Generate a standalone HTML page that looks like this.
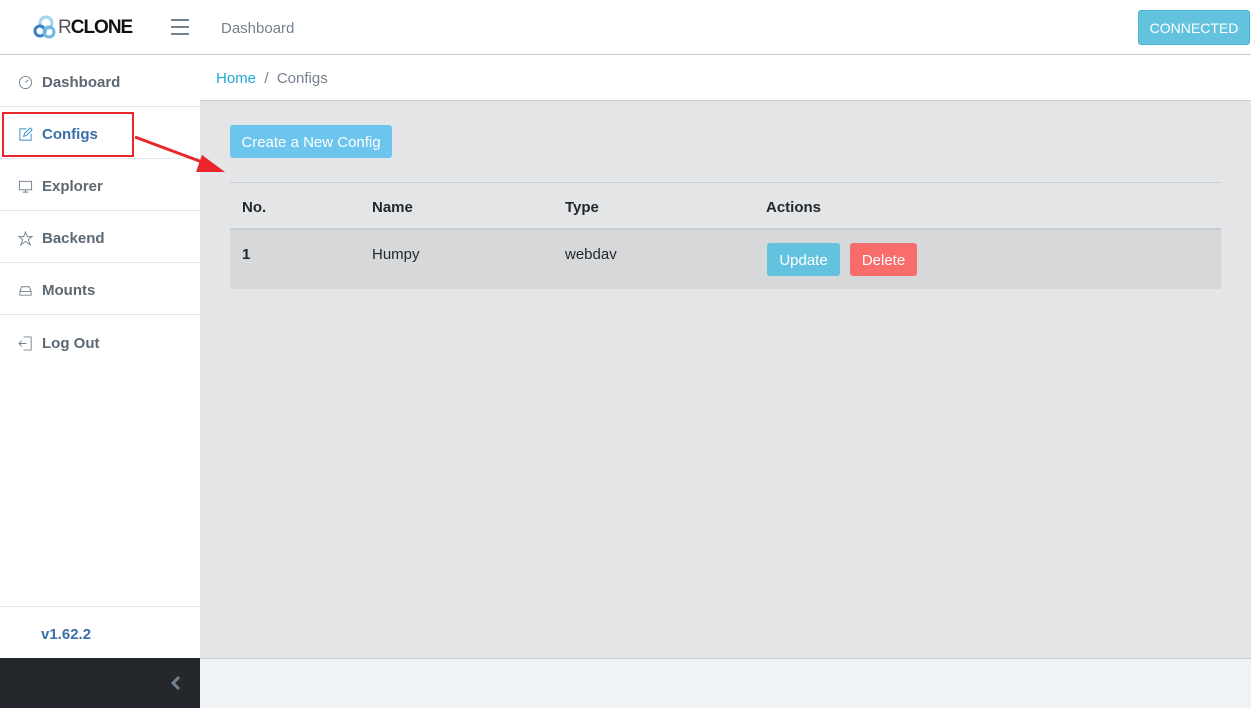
<!DOCTYPE html><html><head><style>
*{box-sizing:border-box;margin:0;padding:0}
body{width:1251px;height:708px;overflow:hidden;font-family:"Liberation Sans",sans-serif;background:#e4e5e6;position:relative;font-size:15px}
.hdr{position:absolute;left:0;top:0;width:1251px;height:55px;background:#fff;border-bottom:1px solid #c8ced3}
.side{position:absolute;left:0;top:55px;width:200px;height:603px;background:#fff}
.item{height:52px;border-bottom:1px solid #e4e7ea;display:flex;align-items:center;padding-left:18px;padding-top:4px;font-weight:bold;color:#5c6873;font-size:15px}
.item svg{width:15px;height:15px;margin-right:9px}
.bc{position:absolute;left:200px;top:55px;width:1051px;height:46px;background:#fff;border-bottom:1px solid #c8ced3;padding:15px 16px;color:#73818f}
.foot{position:absolute;left:200px;top:658px;width:1051px;height:50px;background:#f0f3f5;border-top:1px solid #c8ced3}
.btn{position:absolute;color:#fff;border-radius:3px;font-size:15px;text-align:center}
</style></head><body>
<div class="hdr">
<svg style="position:absolute;left:33px;top:15px" width="24" height="24" viewBox="0 0 24 24"><circle cx="13" cy="8" r="6" fill="none" stroke="#9fd3ee" stroke-width="3"/><circle cx="7" cy="16" r="5" fill="none" stroke="#3d7fc1" stroke-width="3"/><circle cx="16" cy="17" r="5" fill="none" stroke="#6fb8e2" stroke-width="3"/></svg>
<div style="position:absolute;left:58px;top:17px;font-size:19px;color:#111;letter-spacing:-1px"><span style="font-weight:normal;color:#555">R</span><b>CLONE</b></div>
<div style="position:absolute;left:171px;top:19px;width:18px"><div style="height:2px;background:#73818f;margin-bottom:5px"></div><div style="height:2px;background:#73818f;margin-bottom:5px"></div><div style="height:2px;background:#73818f"></div></div>
<div style="position:absolute;left:221px;top:20px;color:#73818f">Dashboard</div>
<div class="btn" style="left:1138px;top:10px;width:112px;height:35px;background:#63c2de;line-height:35px;border:1px solid #4fb5d4;font-size:14px">CONNECTED</div>
</div>
<div class="side">
<div class="item"><svg viewBox="0 0 16 16" fill="none" stroke="#73818f"><circle cx="8" cy="8" r="6.5"/><path d="M8 8l3-3"/></svg>Dashboard</div>
<div class="item" style="color:#3a6fa8"><svg viewBox="0 0 16 16" fill="none" stroke="#3a8fc8"><path d="M9 2H2v12h12V7M6 10l1-3 6-6 2 2-6 6z"/></svg>Configs</div>
<div class="item"><svg viewBox="0 0 16 16" fill="none" stroke="#73818f"><rect x="1.5" y="2.5" width="13" height="9"/><path d="M5 14h6M8 12v2"/></svg>Explorer</div>
<div class="item"><svg viewBox="0 0 16 16" fill="none" stroke="#73818f"><path d="M8 1l2 5h5l-4 3 2 6-5-4-5 4 2-6-4-3h5z"/></svg>Backend</div>
<div class="item"><svg viewBox="0 0 16 16" fill="none" stroke="#73818f"><path d="M2 9l2-5h8l2 5v4H2zM2 9h12"/></svg>Mounts</div>
<div class="item" style="border-bottom:none"><svg viewBox="0 0 16 16" fill="none" stroke="#73818f"><path d="M6 1h8v14H6M1 8h8M4 5L1 8l3 3"/></svg>Log Out</div>
<div style="position:absolute;left:0;top:551px;width:200px;border-top:1px solid #e4e7ea;height:52px;padding:19px 0 0 41px;font-weight:bold;color:#3a6fa8">v1.62.2</div>
</div>
<div style="position:absolute;left:0;top:658px;width:200px;height:50px;background:#24272b"><svg style="position:absolute;left:170px;top:17px" width="12" height="16"><path d="M9 2L3 8l6 6" stroke="#73818f" stroke-width="3" fill="none"/></svg></div>
<div class="bc"><span style="color:#20a8d8">Home</span>&nbsp; / &nbsp;Configs</div>
<div class="foot"></div>
<div class="btn" style="left:230px;top:125px;width:162px;height:33px;line-height:35px;background:#6cc5ec">Create a New Config</div>
<div style="position:absolute;left:230px;top:182px;width:991px;border-top:1px solid #c8ced3"></div>
<div style="position:absolute;left:230px;top:183px;width:991px;height:45px;font-weight:bold;color:#23282c">
<span style="position:absolute;left:12px;top:16px">No.</span><span style="position:absolute;left:142px;top:16px">Name</span><span style="position:absolute;left:335px;top:16px">Type</span><span style="position:absolute;left:536px;top:16px">Actions</span></div>
<div style="position:absolute;left:230px;top:228px;width:991px;height:61px;background:#d7d8da;border-top:2px solid #c8ced3;color:#23282c">
<span style="position:absolute;left:12px;top:16px;font-weight:bold">1</span><span style="position:absolute;left:142px;top:16px">Humpy</span><span style="position:absolute;left:335px;top:16px">webdav</span></div>
<div class="btn" style="left:767px;top:243px;width:73px;height:33px;line-height:35px;background:#63c2de">Update</div>
<div class="btn" style="left:850px;top:243px;width:67px;height:33px;line-height:35px;background:#f86c6b">Delete</div>
<div style="position:absolute;left:2px;top:112px;width:132px;height:45px;border:2px solid #e8262b"></div>
<svg style="position:absolute;left:130px;top:130px" width="100" height="50"><path d="M5 7L80 35" stroke="#e8262b" stroke-width="3"/><path d="M95 42L72 25 66 42z" fill="#e8262b"/></svg>
</body></html>
